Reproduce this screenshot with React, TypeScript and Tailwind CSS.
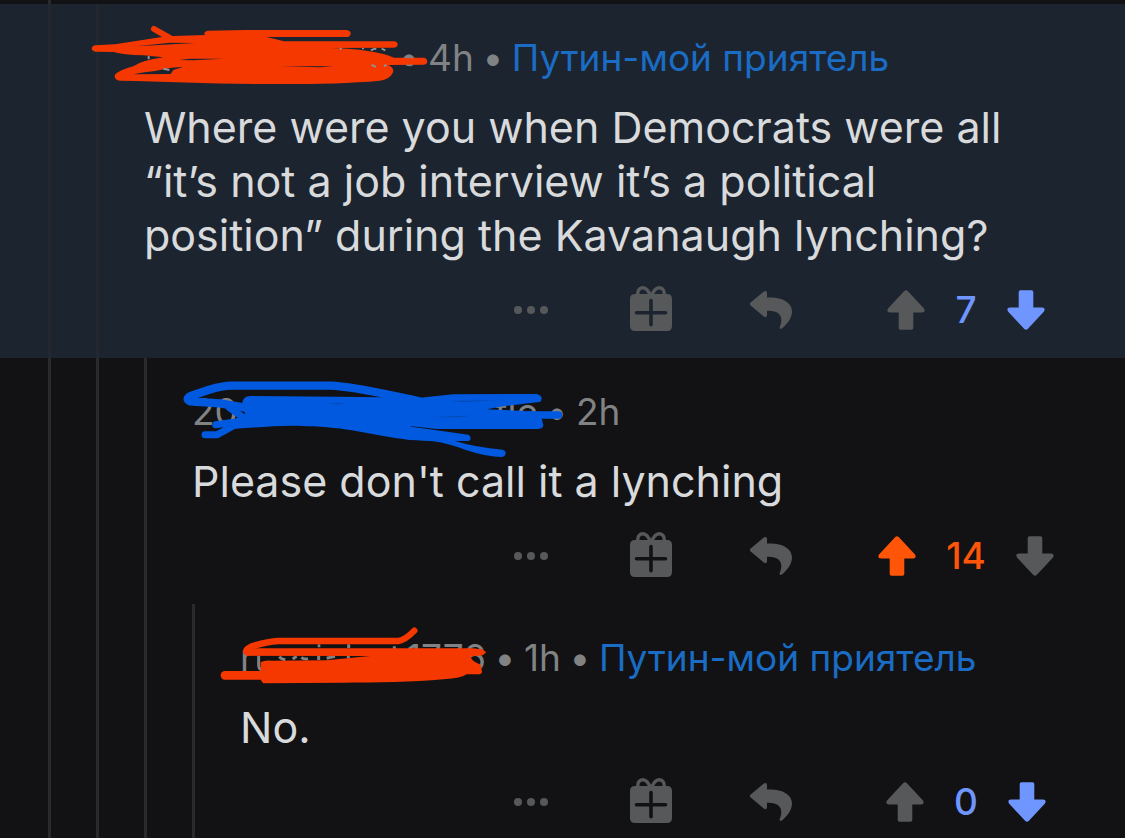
import type { ReactNode } from "react";

type Vote = "up" | "down";

function GiftIcon() {
  return (
    <svg viewBox="0 0 44 48" className="h-12 w-11" fill="none" aria-hidden="true">
      <path d="M22 11C19.500 4.500 17 1.800 14 1.800C11 1.800 8.800 4 8.800 7V10M22 11C24.500 4.500 27 1.800 30 1.800C33 1.800 35.200 4 35.200 7V10" stroke="currentColor" strokeWidth="3.4" />
      <path fillRule="evenodd" fill="currentColor" d="M6 8H38Q43 8 43 13V40Q43 45 38 45H6Q1 45 1 40V13Q1 8 6 8ZM20.200 14.500V25H7.500Q5.700 25 5.700 26.800Q5.700 28.600 7.500 28.600H20.200V38.800Q20.200 40.500 22 40.500Q23.800 40.500 23.800 38.800V28.600H36.500Q38.300 28.600 38.300 26.800Q38.300 25 36.500 25H23.800V14.500Q23.800 12.800 22 12.800Q20.200 12.800 20.200 14.500Z" />
    </svg>
  );
}

function ReplyIcon() {
  return (
    <svg viewBox="0 0 44 40" className="h-10 w-11" fill="currentColor" aria-hidden="true">
      <path d="M1.700 12.600L14.800 1.500Q18 0 18 3.200V7.600C31 6.300 43 11.500 43 21.500C43 28 38 34.500 32.800 38.500Q30.300 39.700 30.600 37.300C35 27 31 20 18 20.700V25Q17.600 28.500 14.800 26.500L1.700 15.500Q0 14 1.700 12.600Z" />
    </svg>
  );
}

function ArrowIcon({ down = false }: { down?: boolean }) {
  return (
    <svg viewBox="0 0 38 40" className={down ? "h-10 w-[38px] rotate-180" : "h-10 w-[38px]"} fill="currentColor" aria-hidden="true">
      <path d="M17.300 1Q19 -0.600 20.700 1L37 18.500Q39 22.500 35 22.500H26.300V38Q26.300 39.700 24.500 39.700H13.500Q11.700 39.700 11.700 38V22.500H3Q-1 22.500 1 18.500Z" />
    </svg>
  );
}

function Dot() {
  return <span className="w-[38px] shrink-0 text-center">•</span>;
}

function Actions({ score, vote }: { score: number; vote: Vote }) {
  const active = vote === "up" ? "text-[#ff5508]" : "text-[#6f96ff]";
  return (
    <div className="flex h-24 items-center justify-end pr-6 text-[#57585a]">
      <button aria-label="More" className="flex w-30 justify-center">
        <svg viewBox="0 0 36 8" className="h-2 w-9" fill="currentColor" aria-hidden="true">
          <circle cx="5" cy="4" r="4" />
          <circle cx="18" cy="4" r="4" />
          <circle cx="31" cy="4" r="4" />
        </svg>
      </button>
      <button aria-label="Give award" className="flex w-30 justify-center"><GiftIcon /></button>
      <button aria-label="Reply" className="flex w-30 justify-center"><ReplyIcon /></button>
      <div className="flex w-[270px] items-center justify-center gap-[30px]">
        <button aria-label="Upvote" className={vote === "up" ? active : ""}><ArrowIcon /></button>
        <span className={`text-[37px] leading-10 font-medium ${active}`}>{score}</span>
        <button aria-label="Downvote" className={vote === "down" ? active : ""}><ArrowIcon down /></button>
      </div>
    </div>
  );
}

interface CommentProps {
  depth: number;
  name: [string, string];
  nameWidth: string;
  scribble: ReactNode;
  age: string;
  flair?: string;
  score: number;
  vote: Vote;
  highlighted?: boolean;
  children: ReactNode;
}

function Comment({ depth, name, nameWidth, scribble, age, flair, score, vote, highlighted, children }: CommentProps) {
  return (
    <article className={`flex pl-12 ${highlighted ? "bg-[#1c2430]" : "bg-[#121214]"}`}>
      {Array.from({ length: depth }, (_, i) => (
        <div key={i} className={`w-12 shrink-0 border-l-[3px] ${highlighted ? "border-[#23282f]" : "border-[#2a2a2c]"}`} />
      ))}
      <div className="min-w-0 flex-1">
        <header className="relative mt-[30px] flex h-12 items-center text-[37px] whitespace-nowrap text-[#818284]">
          <span className={`flex shrink-0 justify-between ${nameWidth}`}>
            <span>{name[0]}</span>
            <span>{name[1]}</span>
          </span>
          <Dot />
          <time>{age}</time>
          {flair && (
            <>
              <Dot />
              <span className="text-[#1a6cc4]">{flair}</span>
            </>
          )}
          {scribble}
        </header>
        <p className="mt-[18px] pr-20 text-[43px] leading-[54px] text-[#d8dadc]">{children}</p>
        <Actions score={score} vote={vote} />
      </div>
    </article>
  );
}

function WideRedScribble() {
  return (
    <svg viewBox="0 0 1110 240" className="absolute -top-[19px] -left-16 h-20 w-[370px]" fill="#f53800" aria-hidden="true">
      <path d="M222 42L268 68" stroke="#f53800" strokeWidth="18" strokeLinecap="round" />
      <path d="M45 91L105 88L260 64L375 60Q368 50 384 47L500 45H800Q812 47 812 55Q812 66 800 66H560L612 79L942 79Q953 80 953 88Q953 98 942 98L750 99Q880 102 942 128H1032Q1042 131 1042 139Q1042 149 1032 149L925 150Q945 160 938 174Q928 194 900 197C800 206 680 208 540 207C380 206 250 199 120 197Q104 196 104 182Q106 170 160 154Q185 136 250 127L190 121Q130 120 100 111L45 110Q35 107 35 100Q36 93 45 91Z" />
      <g fill="#1c2430">
        <path d="M170 94L270 83L345 84Z" />
        <path d="M160 178Q195 171 225 168L275 158L310 155L280 165L272 177Z" />
        <path d="M298 135L330 131L430 131L340 136Z" />
        <path d="M600 153L760 154L720 157Z" />
      </g>
      <path d="M206 123V133M250 161L268 165M782 98V104M849 99V103M873 106Q880 101 889 101M905 101L916 106M875 149Q879 154 888 155M912 154L919 149" fill="none" stroke="#909294" strokeWidth="6" />
      <path d="M977 130Q989 116 1001 130ZM977 149Q989 158 1001 149Z" fill="#818284" />
    </svg>
  );
}

function BlueScribble() {
  return (
    <svg viewBox="0 0 1380 300" className="absolute -top-[23px] -left-[22px] h-[100px] w-[460px]" fill="#0059df" aria-hidden="true">
      <g fill="none" stroke="#0059df" strokeLinecap="round" strokeLinejoin="round">
        <path d="M225 128L150 115L60 109Q45 101 62 93L115 75Q160 61 190 62H480C570 66 650 90 745 108" strokeWidth="25" />
        <path d="M105 209H142L195 180M178 128L215 154M137 179L220 168" strokeWidth="21" />
        <path d="M1080 150H1166" strokeWidth="22" />
      </g>
      <path d="M217 112Q220 94 240 93L500 95L750 98L850 88L1100 87Q1115 90 1115 101Q1115 112 1100 112L1000 124L950 133L1110 140L1120 180Q1120 190 1105 192H800L720 183L760 200L800 228L720 225C610 212 550 190 430 184C340 178 280 186 190 192L160 180L225 147Z" />
      <path d="M715 184L895 209Q908 218 897 228H855Q920 248 998 254Q1008 258 1007 265Q1006 275 996 276Q950 276 890 256Q835 235 790 229L700 222Z" />
      <path d="M475 114L535 116L500 118ZM840 108L985 106L880 111ZM780 157L905 152L860 157Z" fill="#0646a8" />
    </svg>
  );
}

function NarrowRedScribble() {
  return (
    <svg viewBox="0 0 1200 240" className="absolute -top-[19px] -left-[30px] h-20 w-[400px]" fill="#f53800" aria-hidden="true">
      <path d="M146 122V150Q146 165 160 165M208 125Q214 133 226 134M248 132L260 124M274 127Q282 134 294 131M326 122V135M350 130L375 124M415 122V130M323 92H331M416 88V99M553 94V103" fill="none" stroke="#818284" strokeWidth="9" />
      <g fill="none" stroke="#f53800" strokeLinecap="round" strokeLinejoin="round">
        <path d="M813 112H110Q103 105 125 94Q170 80 205 78H565Q585 76 613 47" strokeWidth="19" />
        <path d="M45 181H165" strokeWidth="26" />
      </g>
      <path d="M110 100H790Q828 104 828 113Q820 122 785 123Q777 136 812 149L816 170Q815 178 805 178H770Q755 190 700 193C610 201 500 203 400 203L160 205Q152 200 152 190V142Q162 135 185 137L350 136L480 123L110 122Z" />
    </svg>
  );
}

export default function App() {
  return (
    <main className="h-screen overflow-hidden bg-[#121214] font-['Inter','Liberation_Sans',sans-serif]">
      <div className="h-1 pl-12">
        <div className="h-full border-l-[3px] border-[#2a2a2c]" />
      </div>
      <Comment depth={2} name={["", ""]} nameWidth="w-[246px]" scribble={<WideRedScribble />} age="4h" flair="Путин-мой приятель" score={7} vote="down" highlighted>
        Where were you when Democrats were all “it’s not a job interview it’s a political position” during the Kavanaugh lynching?
      </Comment>
      <Comment depth={3} name={["20", "tle"]} nameWidth="w-[346px]" scribble={<BlueScribble />} age="2h" score={14} vote="up">
        Please don't call it a lynching
      </Comment>
      <Comment depth={4} name={["r", "1776"]} nameWidth="w-[246px]" scribble={<NarrowRedScribble />} age="1h" flair="Путин-мой приятель" score={0} vote="down">
        No.
      </Comment>
    </main>
  );
}
